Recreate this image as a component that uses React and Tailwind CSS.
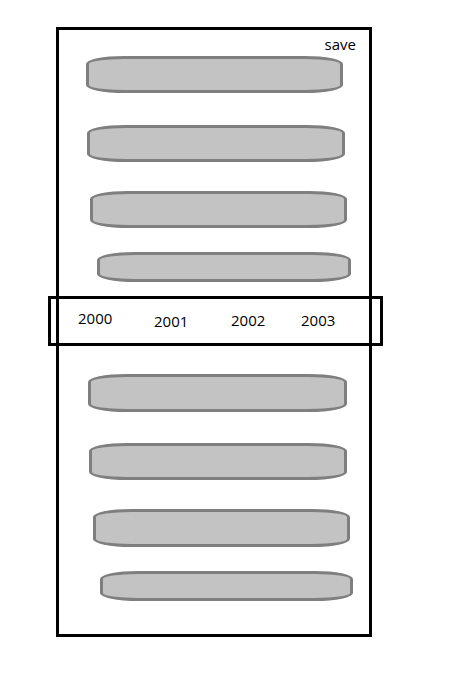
const sans = { fontFamily: '"Open Sans", "Liberation Sans", sans-serif' }

// each pill: left offset, width, top gap, height
const upper = [
  { ml: 'ml-[27px]', w: 'w-[257px]', mt: 'mt-[2px]', h: 'h-[37px]' },
  { ml: 'ml-[28px]', w: 'w-[258px]', mt: 'mt-[32px]', h: 'h-[37px]' },
  { ml: 'ml-[31px]', w: 'w-[257px]', mt: 'mt-[29px]', h: 'h-[37px]' },
  { ml: 'ml-[38px]', w: 'w-[254px]', mt: 'mt-[24px]', h: 'h-[30px]' },
]

const lower = [
  { ml: 'ml-[29px]', w: 'w-[259px]', mt: 'mt-[28px]', h: 'h-[38px]' },
  { ml: 'ml-[30px]', w: 'w-[258px]', mt: 'mt-[31px]', h: 'h-[37px]' },
  { ml: 'ml-[34px]', w: 'w-[257px]', mt: 'mt-[29px]', h: 'h-[38px]' },
  { ml: 'ml-[41px]', w: 'w-[253px]', mt: 'mt-[24px]', h: 'h-[30px]' },
]

function Pill({ ml, w, mt, h }) {
  return (
    <div
      className={`${ml} ${w} ${mt} ${h} shrink-0 border-[3px] border-[#7f7f7f] bg-[#c3c3c3] rounded-[38px/8px]`}
    />
  )
}

// transparent strip, the frame's side lines stay visible through it
function YearStrip() {
  return (
    <div className="-ml-[11px] mt-[14px] w-[335px] h-[50px] shrink-0 border-[3px] border-black flex items-start text-[15px] leading-5 text-black" style={sans}>
      <span className="ml-[27px] mt-[9px] w-[34px]">2000</span>
      <span className="ml-[42px] mt-[12px] w-[34px]">2001</span>
      <span className="ml-[43px] mt-[11px] w-[34px]">2002</span>
      <span className="ml-[36px] mt-[11px] w-[34px]">2003</span>
    </div>
  )
}

export default function App() {
  return (
    <div className="w-[474px] h-[690px] bg-white pt-[27px] pl-[56px]">
      <div className="w-[316px] h-[610px] border-[3px] border-black flex flex-col">
        <div className="pt-[4px] pr-[13px] flex justify-end">
          <span className="text-[15px] leading-5 text-black" style={sans}>save</span>
        </div>
        {upper.map((p, i) => (
          <Pill key={i} {...p} />
        ))}
        <YearStrip />
        {lower.map((p, i) => (
          <Pill key={i} {...p} />
        ))}
      </div>
    </div>
  )
}
